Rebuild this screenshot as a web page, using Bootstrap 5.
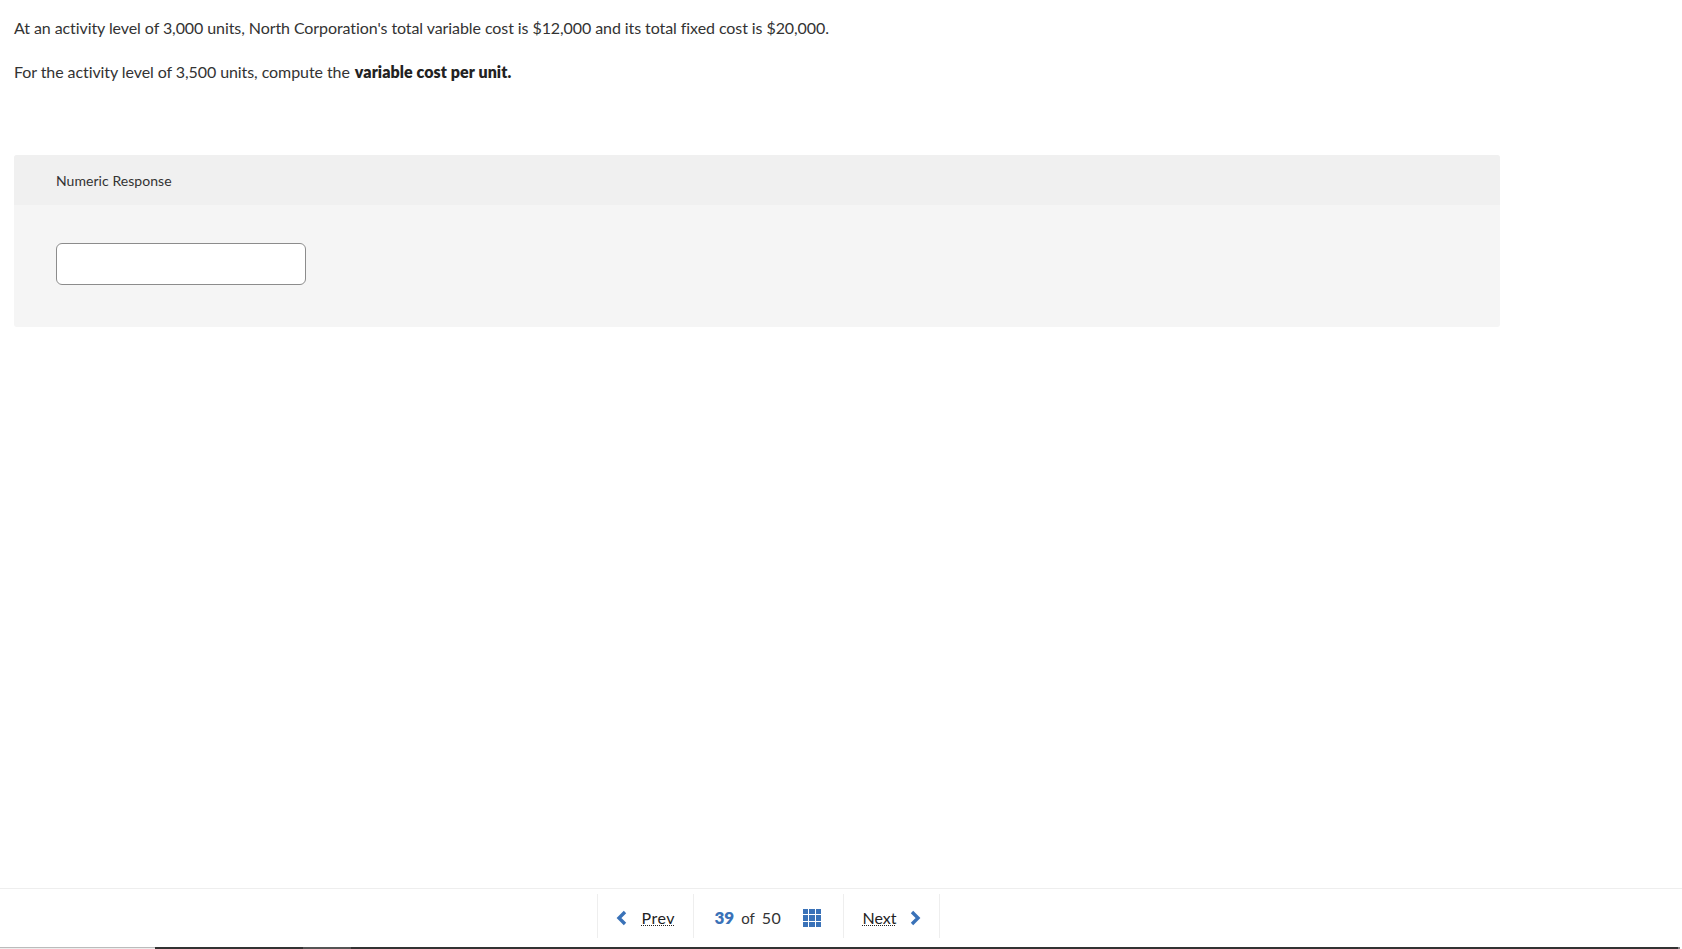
<!DOCTYPE html>
<html lang="en">
<head>
<meta charset="utf-8">
<title>Question 39</title>
<link href="https://cdn.jsdelivr.net/npm/bootstrap@5.3.0/dist/css/bootstrap.min.css" rel="stylesheet">
<style>
html,body{height:100%}
body{font-family:"Lato","Liberation Sans",sans-serif;color:#333;background:#fff;font-size:16px;overflow:hidden}
.q-page{height:949px}
.q-main{padding:17px 14px 0}
.q-text{margin:0 0 26px;line-height:22px;height:18px;letter-spacing:-.08px}
.q-text b{color:#222;font-weight:800;letter-spacing:.08px;margin-left:1px}
.q-panel{width:1486px;margin-top:76px;background:#f5f5f5;border-radius:3px;overflow:hidden}
.q-panel-head{height:50px;background:#f0f0f0;padding-left:42px;font-size:14px;letter-spacing:.05px;color:#333}
.q-panel-body{height:122px;padding:38px 42px 0}
.q-input{width:250px;height:42px;border:1px solid #8c8c8c;border-radius:6px;background:#fff;display:block;outline:0}
.q-foot{height:59px;border-top:1px solid #eee;width:100%}
.q-foot-inner{width:1536px;height:100%}
.q-cell{height:44px;margin-top:5px;border-left:1px solid #eee;padding-top:4px}
.q-cell-end{border-right:1px solid #eee}
.q-prev{width:96px;padding-left:18px;gap:15px}
.q-count{width:150px;padding-left:21px}
.q-next{width:97px;padding-left:19px;gap:13px}
.q-link{color:#222;font-size:16px;text-decoration:underline dotted #222 1px;text-underline-offset:1px}
.q-prev .q-link{letter-spacing:.5px}
.q-num{color:#3a72b8;font-weight:800;font-size:17px}
.q-of{font-size:15px;margin:0 7px}
.q-total{font-size:16px;letter-spacing:.3px}
.q-grid{display:grid;grid-template-columns:repeat(3,5.33px);grid-auto-rows:5.33px;gap:1px;margin-left:22px}
.q-grid span{background:#3a72b8}
.q-chev{width:11px;height:16px;flex:none;stroke:#3a72b8;stroke-width:3.4;fill:none}
.q-strip{height:2px;background:#333}
.q-strip-a{width:155px;background:#eee;border-top:1px solid #bbb}
.q-strip-b{width:148px}
.q-strip-c{width:48px;background:#555}
.q-strip-d{width:1327px}
.q-strip-e{width:2px;background:#888}
</style>
</head>
<body>
<div class="q-page d-flex flex-column">
  <main class="q-main flex-grow-1">
    <p class="q-text">At an activity level of 3,000 units, North Corporation's total variable cost is $12,000 and its total fixed cost is $20,000.</p>
    <p class="q-text">For the activity level of 3,500 units, compute the <b>variable cost per unit.</b></p>
    <section class="q-panel">
      <div class="q-panel-head d-flex align-items-center">Numeric Response</div>
      <div class="q-panel-body"><input class="q-input" type="text" aria-label="Numeric Response"></div>
    </section>
  </main>
  <footer class="q-foot">
    <div class="q-foot-inner d-flex justify-content-center">
      <div class="q-cell q-prev d-flex align-items-center">
        <svg class="q-chev" viewBox="0 0 11 16"><path d="M9 2 3 8l6 6"/></svg>
        <a href="#" class="q-link">Prev</a>
      </div>
      <div class="q-cell q-count d-flex align-items-center">
        <span class="q-num">39</span><span class="q-of">of</span><span class="q-total">50</span>
        <div class="q-grid"><span></span><span></span><span></span><span></span><span></span><span></span><span></span><span></span><span></span></div>
      </div>
      <div class="q-cell q-next q-cell-end d-flex align-items-center">
        <a href="#" class="q-link">Next</a>
        <svg class="q-chev" viewBox="0 0 11 16"><path d="M2 2l6 6-6 6"/></svg>
      </div>
    </div>
  </footer>
  <div class="d-flex">
    <div class="q-strip q-strip-a"></div><div class="q-strip q-strip-b"></div><div class="q-strip q-strip-c"></div><div class="q-strip q-strip-d"></div><div class="q-strip q-strip-e"></div>
  </div>
</div>
<script src="https://cdn.jsdelivr.net/npm/bootstrap@5.3.0/dist/js/bootstrap.bundle.min.js"></script>
</body>
</html>
